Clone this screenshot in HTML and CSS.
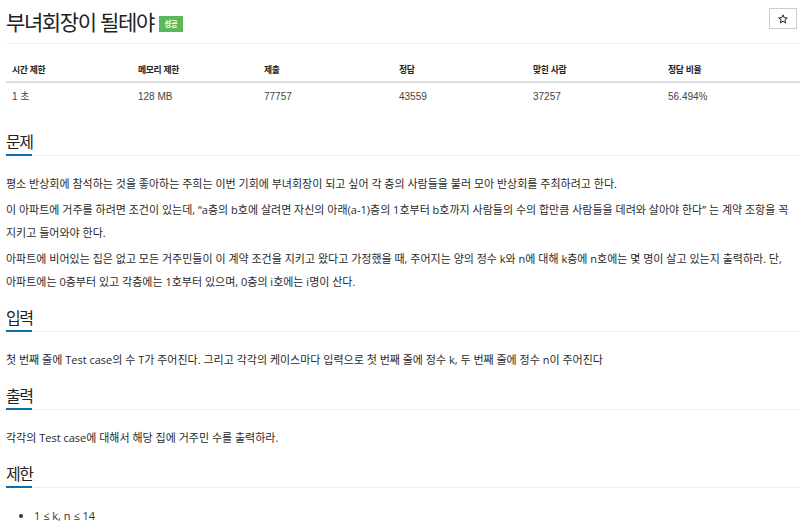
FILE: index.html
```html
<!DOCTYPE html>
<html lang="ko">
<head>
<meta charset="utf-8">
<title>부녀회장이 될테야</title>
<link rel="stylesheet" href="styles.css">
</head>
<body>
<div class="page">
  <div class="top">
    <h1 class="title">부녀회장이 될테야<span class="badge">성공</span></h1>
    <button class="star" type="button" aria-label="즐겨찾기">
      <svg width="10" height="10" viewBox="0 0 10 10"><polygon points="5,0.8 6.2,3.7 9.3,3.9 6.9,5.9 7.7,9 5,7.3 2.3,9 3.1,5.9 0.7,3.9 3.8,3.7" fill="none" stroke="#222" stroke-width="1" stroke-linejoin="round"/></svg>
    </button>
  </div>

  <div class="info">
    <div class="th">시간 제한</div>
    <div class="th">메모리 제한</div>
    <div class="th">제출</div>
    <div class="th">정답</div>
    <div class="th">맞힌 사람</div>
    <div class="th">정답 비율</div>
    <div class="td">1 초</div>
    <div class="td">128 MB</div>
    <div class="td">77757</div>
    <div class="td">43559</div>
    <div class="td">37257</div>
    <div class="td">56.494%</div>
  </div>

  <section class="sec">
    <h2 class="sec-head"><span>문제</span></h2>
    <div class="sec-body">
      <p>평소 반상회에 참석하는 것을 좋아하는 주희는 이번 기회에 부녀회장이 되고 싶어 각 층의 사람들을 불러 모아 반상회를 주최하려고 한다.</p>
      <p>이 아파트에 거주를 하려면 조건이 있는데, “a층의 b호에 살려면 자신의 아래(a-1)층의 1호부터 b호까지 사람들의 수의 합만큼 사람들을 데려와 살아야 한다” 는 계약 조항을 꼭 지키고 들어와야 한다.</p>
      <p>아파트에 비어있는 집은 없고 모든 거주민들이 이 계약 조건을 지키고 왔다고 가정했을 때, 주어지는 양의 정수 k와 n에 대해 k층에 n호에는 몇 명이 살고 있는지 출력하라. 단, 아파트에는 0층부터 있고 각층에는 1호부터 있으며, 0층의 i호에는 i명이 산다.</p>
    </div>
  </section>

  <section class="sec">
    <h2 class="sec-head"><span>입력</span></h2>
    <div class="sec-body">
      <p>첫 번째 줄에 Test case의 수 T가 주어진다. 그리고 각각의 케이스마다 입력으로 첫 번째 줄에 정수 k, 두 번째 줄에 정수 n이 주어진다</p>
    </div>
  </section>

  <section class="sec">
    <h2 class="sec-head"><span>출력</span></h2>
    <div class="sec-body">
      <p>각각의 Test case에 대해서 해당 집에 거주민 수를 출력하라.</p>
    </div>
  </section>

  <section class="sec">
    <h2 class="sec-head"><span>제한</span></h2>
    <div class="sec-body">
      <ul class="limits">
        <li>1 ≤ k, n ≤ 14</li>
      </ul>
    </div>
  </section>
</div>
</body>
</html>
```

FILE: styles.css
```css
html, body {
  margin: 0;
  padding: 0;
  background: #fff;
}

body {
  color: #333;
  font-family: "Open Sans", "Noto Sans CJK KR", sans-serif;
  overflow: hidden;
}

.page {
  padding-left: 6px;
}

.top {
  display: flex;
  justify-content: space-between;
  align-items: flex-start;
  height: 44px;
  box-sizing: border-box;
  padding-top: 6px;
  border-bottom: 1px solid #eee;
}

.title {
  margin: 0;
  font-family: "Noto Sans CJK KR", sans-serif;
  font-weight: 400;
  font-size: 21px;
  line-height: 30px;
  letter-spacing: -1.4px;
  color: #222;
  display: flex;
  align-items: center;
}

.badge {
  display: inline-block;
  margin-left: 5px;
  margin-top: 5px;
  width: 24px;
  height: 16px;
  line-height: 16px;
  text-align: center;
  background: #5cb85c;
  color: #fff;
  font-size: 7.5px;
  font-weight: 700;
  letter-spacing: -0.3px;
}

.star {
  margin: 2px 3px 0 0;
  width: 28px;
  height: 21px;
  padding: 0;
  border: 1px solid #ccc;
  background: #fff;
  display: flex;
  align-items: center;
  justify-content: center;
}

.star svg {
  display: block;
}

.info {
  display: grid;
  grid-template-columns: 126px 126px 135px 134px 135px 1fr;
  margin-top: 12px;
}

.th {
  padding: 7px 6px 4px;
  line-height: 14px;
  font-family: "Noto Sans CJK KR", sans-serif;
  font-weight: 700;
  font-size: 8.8px;
  letter-spacing: -0.3px;
  color: #222;
  border-bottom: 2px solid #ddd;
}

.td {
  padding: 7px 6px 7px;
  line-height: 14px;
  font-family: "Liberation Sans", "Noto Sans CJK KR", sans-serif;
  font-size: 10px;
  color: #444;
}

.sec {
  margin-top: 19px;
}

.sec + .sec {
  margin-top: 13px;
}

.sec-head {
  margin: 0;
  font-family: "Noto Sans CJK KR", sans-serif;
  font-weight: 400;
  font-size: 16px;
  line-height: 22px;
  letter-spacing: -1.5px;
  color: #222;
  border-bottom: 1px solid #eee;
}

.sec-head span {
  display: inline-block;
  padding-bottom: 2px;
  border-bottom: 2px solid #0a6ea8;
  margin-bottom: -1px;
}

.sec-body {
  margin-top: 16px;
  margin-right: 2px;
}

.sec-body p {
  margin: 0 0 3px;
  font-size: 11px;
  line-height: 23px;
  letter-spacing: 0;
  word-break: keep-all;
  color: #2a2a2a;
}

.limits {
  margin: 0;
  padding-left: 28px;
  font-size: 11px;
  line-height: 23px;
}
```
